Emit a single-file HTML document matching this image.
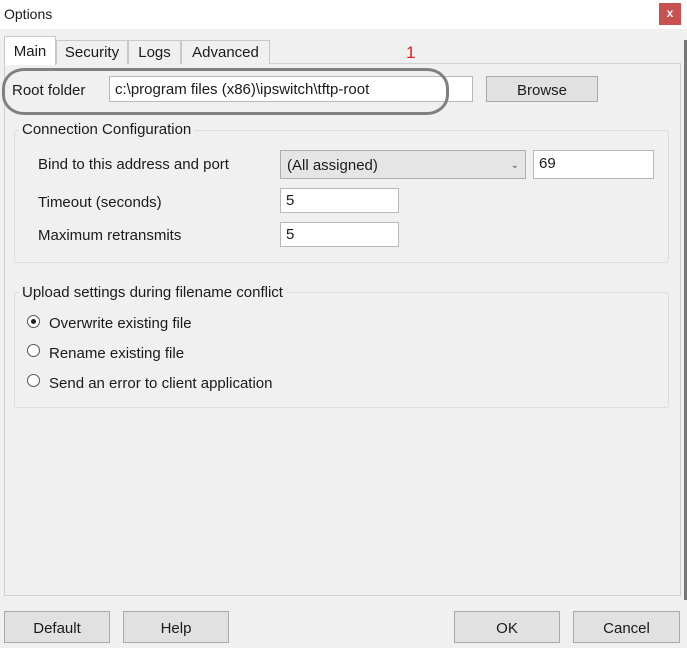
<!DOCTYPE html>
<html><head><style>
*{box-sizing:border-box;margin:0;padding:0}
body{width:687px;height:648px;background:#f0f0f0;font-family:"Liberation Sans",sans-serif;color:#1a1a1a;position:relative;overflow:hidden;font-size:15px}
.a{position:absolute}
.inp{position:absolute;background:#fff;border:1px solid #b8b8b8;padding-left:5px;line-height:24px;font-size:15px}
.btn{position:absolute;background:#e1e1e1;border:1px solid #a9a9a9;text-align:center;font-size:15px}
.tab{position:absolute;border:1px solid #c8c8c8;border-bottom:none;background:#f0f0f0;text-align:center;line-height:24px;font-size:15px}
.grp{position:absolute;border:1px solid #dcdcdc;border-radius:3px}
.gl{position:absolute;background:#f0f0f0;padding:0 3px;font-size:15px}
.rad{position:absolute;width:13px;height:13px;border:1px solid #555;border-radius:50%;background:#fff}
</style></head><body>
<div class="a" style="left:0;top:0;width:687px;height:29px;background:#fff"></div>
<div class="a" style="left:4px;top:6px;font-size:14px">Options</div>
<div class="a" style="left:659px;top:3px;width:22px;height:22px;background:#c75050;color:#fff;font-size:12px;text-align:center;line-height:20px;font-weight:bold">x</div>
<div class="a" style="left:684px;top:40px;width:3px;height:560px;background:#777"></div>
<div class="a" style="left:4px;top:63px;width:677px;height:533px;border:1px solid #d0d0d0;background:#f0f0f0"></div>
<div class="tab" style="left:56px;top:40px;width:72px;height:24px">Security</div>
<div class="tab" style="left:128px;top:40px;width:53px;height:24px">Logs</div>
<div class="tab" style="left:181px;top:40px;width:89px;height:24px">Advanced</div>
<div class="tab" style="left:4px;top:36px;width:52px;height:29px;background:#fff;line-height:30px">Main</div>
<div class="a" style="left:406px;top:43px;color:#e02020;font-size:17px">1</div>
<div class="a" style="left:12px;top:82px">Root folder</div>
<div class="inp" style="left:109px;top:76px;width:364px;height:26px;line-height:25px">c:\program files (x86)\ipswitch\tftp-root</div>
<div class="btn" style="left:486px;top:76px;width:112px;height:26px;line-height:27px">Browse</div>
<div class="a" style="left:2px;top:68px;width:447px;height:47px;border:3px solid #808080;border-radius:22px/20px"></div>
<div class="grp" style="left:14px;top:130px;width:655px;height:133px"></div>
<div class="gl" style="left:19px;top:121px">Connection Configuration</div>
<div class="a" style="left:38px;top:156px">Bind to this address and port</div>
<div class="a" style="left:280px;top:150px;width:246px;height:29px;background:#e5e5e5;border:1px solid #adadad;padding-left:6px;line-height:30px">(All assigned)<span style="position:absolute;right:6px;top:0;font-size:10px;color:#555">&#8964;</span></div>
<div class="inp" style="left:533px;top:150px;width:121px;height:29px;line-height:25px">69</div>
<div class="a" style="left:38px;top:194px">Timeout (seconds)</div>
<div class="inp" style="left:280px;top:188px;width:119px;height:25px">5</div>
<div class="a" style="left:38px;top:227px">Maximum retransmits</div>
<div class="inp" style="left:280px;top:222px;width:119px;height:25px">5</div>
<div class="grp" style="left:14px;top:292px;width:655px;height:116px"></div>
<div class="gl" style="left:19px;top:284px">Upload settings during filename conflict</div>
<div class="rad" style="left:27px;top:315px"><div class="a" style="left:3px;top:3px;width:5px;height:5px;border-radius:50%;background:#222"></div></div>
<div class="a" style="left:49px;top:315px">Overwrite existing file</div>
<div class="rad" style="left:27px;top:344px"></div>
<div class="a" style="left:49px;top:345px">Rename existing file</div>
<div class="rad" style="left:27px;top:374px"></div>
<div class="a" style="left:49px;top:375px">Send an error to client application</div>
<div class="btn" style="left:4px;top:611px;width:106px;height:32px;line-height:33px">Default</div>
<div class="btn" style="left:123px;top:611px;width:106px;height:32px;line-height:33px">Help</div>
<div class="btn" style="left:454px;top:611px;width:106px;height:32px;line-height:33px">OK</div>
<div class="btn" style="left:573px;top:611px;width:107px;height:32px;line-height:33px">Cancel</div>
</body></html>
